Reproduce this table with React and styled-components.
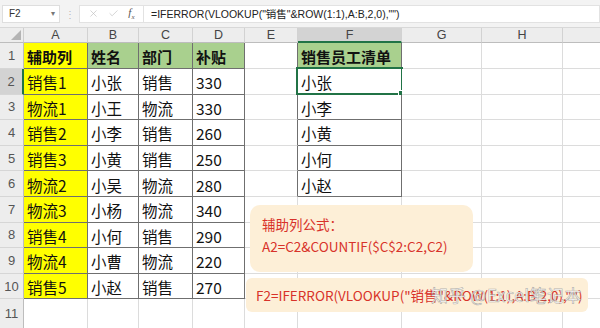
import styled, { createGlobalStyle } from "styled-components";
import { X, Check } from "lucide-react";

const GlobalStyle = createGlobalStyle`
  html, body {
    margin: 0;
    padding: 0;
    background: #ffffff;
  }
  body {
    font-family: "Noto Sans CJK SC", "Noto Sans", sans-serif;
    overflow: hidden;
  }
`;

const COLS = [
  { key: "A", width: 64 },
  { key: "B", width: 51 },
  { key: "C", width: 54 },
  { key: "D", width: 52 },
  { key: "E", width: 53 },
  { key: "F", width: 104 },
  { key: "G", width: 80 },
  { key: "H", width: 81 },
  { key: "I", width: 60 },
];

const tableRows = [
  ["辅助列", "姓名", "部门", "补贴"],
  ["销售1", "小张", "销售", "330"],
  ["物流1", "小王", "物流", "330"],
  ["销售2", "小李", "销售", "260"],
  ["销售3", "小黄", "销售", "250"],
  ["物流2", "小吴", "物流", "280"],
  ["物流3", "小杨", "物流", "340"],
  ["销售4", "小何", "销售", "290"],
  ["物流4", "小曹", "物流", "220"],
  ["销售5", "小赵", "销售", "270"],
];

const listRows = ["销售员工清单", "小张", "小李", "小黄", "小何", "小赵"];

const YELLOW = "#ffff00";
const GREEN = "#a9d08e";
const RULE = "#6f6f6f";
const GRID = "#dcdcdc";
const SELECT = "#217346";

function App() {
  const cells = [];

  // column header row
  cells.push(
    <Corner key="corner">
      <CornerMark />
    </Corner>
  );
  COLS.forEach((c) => {
    cells.push(
      <ColHead key={`h-${c.key}`} $active={c.key === "F"}>
        {c.key !== "I" ? c.key : ""}
      </ColHead>
    );
  });

  for (let r = 1; r <= 11; r++) {
    cells.push(
      <RowHead key={`r-${r}`} $active={r === 2}>
        {r}
      </RowHead>
    );
    COLS.forEach((c, ci) => {
      let text = "";
      let bg = "#ffffff";
      let bold = false;
      let ruleRight = false;
      let ruleBottom = false;

      if (r <= 10 && ci < 4) {
        text = tableRows[r - 1][ci];
        ruleRight = true;
        ruleBottom = true;
        if (ci === 0) bg = YELLOW;
        else if (r === 1) bg = GREEN;
        bold = r === 1;
      }
      if (r <= 6 && c.key === "F") {
        text = listRows[r - 1];
        ruleRight = true;
        ruleBottom = true;
        if (r === 1) {
          bg = GREEN;
          bold = true;
        }
      }
      if (r <= 6 && c.key === "E") ruleRight = true;

      cells.push(
        <Cell
          key={`${c.key}${r}`}
          $bg={bg}
          $bold={bold}
          $ruleRight={ruleRight}
          $ruleBottom={ruleBottom}
        >
          {text}
          {c.key === "F" && r === 2 && (
            <Selection>
              <FillHandle />
            </Selection>
          )}
        </Cell>
      );
    });
  }

  return (
    <>
      <GlobalStyle />
      <Window>
        <FormulaBar>
          <NameBox>
            <span>F2</span>
            <Caret>▾</Caret>
          </NameBox>
          <Dots>⋮</Dots>
          <ActionBox>
            <X size={11} strokeWidth={1.4} color="#bdbdbd" />
            <Check size={11} strokeWidth={1.4} color="#bdbdbd" />
            <Fx>
              f<sub>x</sub>
            </Fx>
          </ActionBox>
          <FormulaInput>=IFERROR(VLOOKUP("销售"&amp;ROW(1:1),A:B,2,0),"")</FormulaInput>
        </FormulaBar>
        <Sheet>
          <Grid>{cells}</Grid>
          <NoteCard>
            <NoteLine>辅助列公式：</NoteLine>
            <NoteLine>A2=C2&amp;COUNTIF($C$2:C2,C2)</NoteLine>
          </NoteCard>
          <FormulaCard>
            <NoteLine>F2=IFERROR(VLOOKUP("销售"&amp;ROW(1:1),A:B,2,0),"")</NoteLine>
          </FormulaCard>
          <Watermark>知乎 @Excel笔记本</Watermark>
        </Sheet>
      </Window>
    </>
  );
}

const Window = styled.div`
  width: 600px;
  height: 328px;
  overflow: hidden;
  display: flex;
  flex-direction: column;
  background: #ffffff;
`;

const FormulaBar = styled.div`
  height: 28px;
  box-sizing: border-box;
  display: flex;
  align-items: center;
  padding: 0 0 0 2px;
  background: #f3f3f3;
  border-bottom: 1px solid #d8d8d8;
  flex-shrink: 0;
`;

const NameBox = styled.div`
  width: 58px;
  height: 18px;
  box-sizing: border-box;
  background: #ffffff;
  border: 1px solid #dedede;
  display: flex;
  align-items: center;
  justify-content: space-between;
  padding: 0 4px 0 6px;
  font-family: "Liberation Sans", Arial, sans-serif;
  font-size: 10px;
  color: #333333;
`;

const Caret = styled.span`
  font-size: 8px;
  color: #777777;
`;

const Dots = styled.span`
  width: 19px;
  text-align: center;
  font-size: 10px;
  color: #b8b8b8;
`;

const ActionBox = styled.div`
  width: 64px;
  height: 18px;
  box-sizing: border-box;
  background: #ffffff;
  border: 1px solid #e2e2e2;
  border-right: none;
  display: flex;
  align-items: center;
  justify-content: space-around;
  padding: 0 4px;
`;

const Fx = styled.span`
  font-family: "Liberation Serif", serif;
  font-style: italic;
  font-size: 11px;
  color: #555555;
  sub {
    font-size: 7px;
  }
`;

const FormulaInput = styled.div`
  flex: 1;
  height: 18px;
  box-sizing: border-box;
  background: #ffffff;
  border: 1px solid #e2e2e2;
  display: flex;
  align-items: center;
  padding-left: 7px;
  font-family: "Liberation Sans", "Noto Sans CJK SC", sans-serif;
  font-size: 10.5px;
  color: #222222;
  white-space: nowrap;
`;

const Sheet = styled.div`
  position: relative;
  flex: 1;
`;

const Grid = styled.div`
  display: grid;
  grid-template-columns: 24px ${COLS.map((c) => `${c.width}px`).join(" ")};
  grid-template-rows: 15px 26px repeat(9, 25.6px) 30px;
`;

const HeadBase = styled.div`
  box-sizing: border-box;
  background: ${(p) => (p.$active ? "#d3d3d3" : "#ededed")};
  color: #444444;
  display: flex;
  align-items: center;
  justify-content: center;
  font-family: "Liberation Sans", Arial, sans-serif;
`;

const Corner = styled(HeadBase)`
  position: relative;
  border-right: 1px solid #cfcfcf;
  border-bottom: 1px solid #bdbdbd;
`;

const CornerMark = styled.div`
  position: absolute;
  right: 2px;
  bottom: 2px;
  width: 0;
  height: 0;
  border-left: 10px solid transparent;
  border-bottom: 10px solid #b4b4b4;
`;

const ColHead = styled(HeadBase)`
  font-size: 12.5px;
  border-right: 1px solid #d2d2d2;
  border-bottom: ${(p) => (p.$active ? `2px solid ${SELECT}` : "1px solid #bdbdbd")};
`;

const RowHead = styled(HeadBase)`
  font-size: 13px;
  color: #555555;
  border-bottom: 1px solid #d6d6d6;
  border-right: ${(p) => (p.$active ? `2px solid ${SELECT}` : "1px solid #bdbdbd")};
`;

const Cell = styled.div`
  position: relative;
  box-sizing: border-box;
  background: ${(p) => p.$bg};
  border-right: 1px solid ${(p) => (p.$ruleRight ? RULE : GRID)};
  border-bottom: 1px solid ${(p) => (p.$ruleBottom ? RULE : GRID)};
  display: flex;
  align-items: center;
  padding: 2px 0 0 3px;
  font-size: ${(p) => (p.$bold ? "15px" : "15.5px")};
  font-weight: ${(p) => (p.$bold ? 700 : 400)};
  color: #111111;
  white-space: nowrap;
  overflow: visible;
`;

const Selection = styled.div`
  position: absolute;
  inset: -2px -2px -1px -2px;
  border: 2px solid ${SELECT};
  pointer-events: none;
`;

const FillHandle = styled.div`
  position: absolute;
  right: -4px;
  bottom: -4px;
  width: 5px;
  height: 5px;
  background: ${SELECT};
  border: 1px solid #ffffff;
`;

const Card = styled.div`
  position: absolute;
  background: #fdefd7;
  color: #d8322a;
  font-size: 13.5px;
  box-sizing: border-box;
`;

const NoteCard = styled(Card)`
  left: 250px;
  top: 177px;
  width: 223px;
  height: 67px;
  border-radius: 10px;
  padding: 10px 12px;
  display: flex;
  flex-direction: column;
  gap: 4px;
`;

const FormulaCard = styled(Card)`
  left: 246px;
  top: 250px;
  width: 342px;
  height: 34px;
  border-radius: 6px;
  padding: 0 10px;
  display: flex;
  align-items: center;
`;

const NoteLine = styled.div`
  white-space: nowrap;
  line-height: 18px;
`;

const Watermark = styled.div`
  position: absolute;
  left: 431px;
  top: 254px;
  font-size: 17px;
  color: rgba(255, 255, 255, 0.9);
  -webkit-text-stroke: 0.6px rgba(120, 120, 120, 0.6);
  letter-spacing: 0.5px;
  white-space: nowrap;
`;

export default App;
